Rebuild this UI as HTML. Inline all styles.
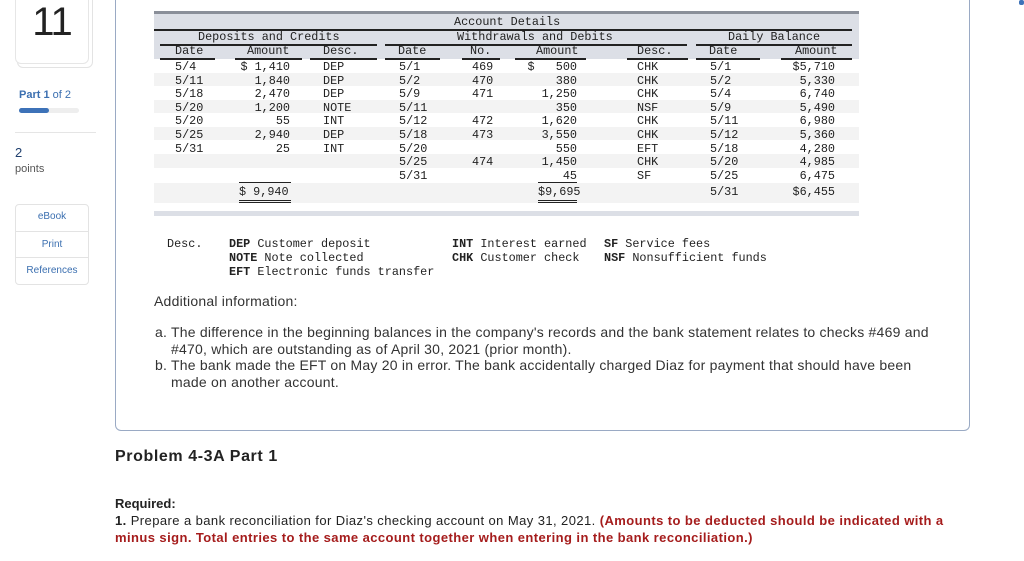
<!DOCTYPE html>
<html><head><meta charset="utf-8"><style>
*{margin:0;padding:0;box-sizing:border-box}
body{width:1024px;height:561px;overflow:hidden;background:#fff;position:relative;font-family:"Liberation Sans",sans-serif;color:#222}
.a{position:absolute;white-space:nowrap}
.m{font-family:"Liberation Mono",monospace;font-size:11.8px;color:#222;line-height:13px}
.r{text-align:right}
.ln{position:absolute;height:1.5px;background:#222}
.s{font-size:14px;line-height:17px;color:#333;letter-spacing:0.22px}
</style></head><body>
<!-- sidebar -->
<div class="a" style="left:17px;top:-10px;width:76px;height:78px;border:1px solid #e3e3e3;border-radius:6px"></div>
<div class="a" style="left:15px;top:-12px;width:74px;height:76px;border:1px solid #e6e6e6;border-radius:6px;background:#fff"></div>
<div class="a" style="left:15px;top:2px;width:74px;text-align:center;font-size:40px;line-height:40px;color:#222;letter-spacing:-1px">11</div>
<div class="a" style="left:19px;top:89px;font-size:11px;color:#3b6fb0"><b>Part 1</b> of 2</div>
<div class="a" style="left:19px;top:108px;width:60px;height:5px;background:#eee;border-radius:3px"></div>
<div class="a" style="left:19px;top:108px;width:30px;height:5px;background:#3d72b8;border-radius:3px"></div>
<div class="a" style="left:15px;top:132px;width:81px;height:1px;background:#e5e5e5"></div>
<div class="a" style="left:15px;top:145px;font-size:13px;color:#1f3f6e">2</div>
<div class="a" style="left:15px;top:163px;font-size:11px;color:#555">points</div>
<div class="a" style="left:15px;top:204px;width:74px;height:81px;border:1px solid #e3e3e3;border-radius:4px"></div>
<div class="a" style="left:15px;top:231px;width:74px;height:1px;background:#e3e3e3"></div>
<div class="a" style="left:15px;top:257px;width:74px;height:1px;background:#e3e3e3"></div>
<div class="a" style="left:15px;top:211px;width:74px;text-align:center;font-size:10px;color:#3b6fb0">eBook</div>
<div class="a" style="left:15px;top:239px;width:74px;text-align:center;font-size:10px;color:#3b6fb0">Print</div>
<div class="a" style="left:15px;top:265px;width:74px;text-align:center;font-size:10px;color:#3b6fb0">References</div>
<div class="a" style="left:1019px;top:0;width:5px;height:5px;background:#3d72b8;border-radius:2px"></div>
<!-- box -->
<div class="a" style="left:115px;top:-20px;width:855px;height:451px;border:1.5px solid #9aaac4;border-top:none;border-radius:0 0 6px 6px"></div>
<!-- table bg -->
<div class="a" style="left:154px;top:11px;width:705px;height:48px;background:#dcdfe6"></div>
<div class="a" style="left:154px;top:11px;width:705px;height:3px;background:#8a8f99"></div>
<div class="a" style="left:154px;top:73px;width:705px;height:13px;background:#f3f3f3"></div>
<div class="a" style="left:154px;top:100px;width:705px;height:13px;background:#f3f3f3"></div>
<div class="a" style="left:154px;top:127px;width:705px;height:13px;background:#f3f3f3"></div>
<div class="a" style="left:154px;top:154px;width:705px;height:14px;background:#f3f3f3"></div>
<div class="a" style="left:154px;top:183px;width:705px;height:20px;background:#f3f3f3"></div>
<div class="a" style="left:154px;top:211px;width:705px;height:5px;background:#dcdfe6"></div>
<!-- header lines -->
<div class="ln" style="left:154px;top:29px;width:698px"></div>
<div class="ln" style="left:160px;top:44px;width:217px"></div>
<div class="ln" style="left:385px;top:44px;width:302px"></div>
<div class="ln" style="left:696px;top:44px;width:156px"></div>
<div class="ln" style="left:160px;top:58px;width:55px"></div>
<div class="ln" style="left:235px;top:58px;width:67px"></div>
<div class="ln" style="left:310px;top:58px;width:67px"></div>
<div class="ln" style="left:385px;top:58px;width:55px"></div>
<div class="ln" style="left:462px;top:58px;width:38px"></div>
<div class="ln" style="left:515px;top:58px;width:71px"></div>
<div class="ln" style="left:627px;top:58px;width:61px"></div>
<div class="ln" style="left:696px;top:58px;width:64px"></div>
<div class="ln" style="left:781px;top:58px;width:71px"></div>
<div class="a m" style="left:454px;top:16px">Account Details</div>
<div class="a m" style="left:198px;top:31px">Deposits and Credits</div>
<div class="a m" style="left:457px;top:31px">Withdrawals and Debits</div>
<div class="a m" style="left:728px;top:31px">Daily Balance</div>
<div class="a m" style="left:175px;top:45px">Date</div>
<div class="a m" style="left:247px;top:45px">Amount</div>
<div class="a m" style="left:323px;top:45px">Desc.</div>
<div class="a m" style="left:398px;top:45px">Date</div>
<div class="a m" style="left:470px;top:45px">No.</div>
<div class="a m" style="left:536px;top:45px">Amount</div>
<div class="a m" style="left:637px;top:45px">Desc.</div>
<div class="a m" style="left:709px;top:45px">Date</div>
<div class="a m" style="left:795px;top:45px">Amount</div>
<!-- body -->
<div class="a m" style="left:175px;top:61px;line-height:13.6px">5/4<br>5/11<br>5/18<br>5/20<br>5/20<br>5/25<br>5/31</div>
<div class="a m r" style="left:220px;width:70px;top:61px;line-height:13.6px">$ 1,410<br>1,840<br>2,470<br>1,200<br>55<br>2,940<br>25</div>
<div class="a m" style="left:323px;top:61px;line-height:13.6px">DEP<br>DEP<br>DEP<br>NOTE<br>INT<br>DEP<br>INT</div>
<div class="a m" style="left:399px;top:61px;line-height:13.6px">5/1<br>5/2<br>5/9<br>5/11<br>5/12<br>5/18<br>5/20<br>5/25<br>5/31</div>
<div class="a m" style="left:472px;top:61px;line-height:13.6px">469<br>470<br>471<br><br>472<br>473<br><br>474</div>
<div class="a m r" style="left:500px;width:77px;top:61px;line-height:13.6px">$&nbsp;&nbsp; 500<br>380<br>1,250<br>350<br>1,620<br>3,550<br>550<br>1,450<br>45</div>
<div class="a m" style="left:637px;top:61px;line-height:13.6px">CHK<br>CHK<br>CHK<br>NSF<br>CHK<br>CHK<br>EFT<br>CHK<br>SF</div>
<div class="a m" style="left:710px;top:61px;line-height:13.6px">5/1<br>5/2<br>5/4<br>5/9<br>5/11<br>5/12<br>5/18<br>5/20<br>5/25</div>
<div class="a m r" style="left:760px;width:75px;top:61px;line-height:13.6px">$5,710<br>5,330<br>6,740<br>5,490<br>6,980<br>5,360<br>4,280<br>4,985<br>6,475</div>
<div class="ln" style="left:239px;top:182px;width:52px;height:1px"></div>
<div class="ln" style="left:538px;top:182px;width:39px;height:1px"></div>
<div class="a m" style="left:239px;top:186px">$ 9,940</div>
<div class="a m" style="left:538px;top:186px">$9,695</div>
<div class="a m" style="left:710px;top:186px">5/31</div>
<div class="a m r" style="left:760px;width:75px;top:186px">$6,455</div>
<div class="ln" style="left:239px;top:200px;width:52px;height:1px"></div>
<div class="ln" style="left:239px;top:202px;width:52px;height:1px"></div>
<div class="ln" style="left:538px;top:200px;width:39px;height:1px"></div>
<div class="ln" style="left:538px;top:202px;width:39px;height:1px"></div>
<!-- legend -->
<div class="a m" style="left:167px;top:238px;font-size:11.8px">Desc.</div>
<div class="a m" style="left:229px;top:238px;font-size:11.8px;line-height:13.8px"><b>DEP</b> Customer deposit<br><b>NOTE</b> Note collected<br><b>EFT</b> Electronic funds transfer</div>
<div class="a m" style="left:452px;top:238px;font-size:11.8px;line-height:13.8px"><b>INT</b> Interest earned<br><b>CHK</b> Customer check</div>
<div class="a m" style="left:604px;top:238px;font-size:11.8px;line-height:13.8px"><b>SF</b> Service fees<br><b>NSF</b> Nonsufficient funds</div>
<!-- text -->
<div class="a s" style="left:154px;top:293px">Additional information:</div>
<div class="a s" style="left:155px;top:324px">a. The difference in the beginning balances in the company's records and the bank statement relates to checks #469 and</div>
<div class="a s" style="left:171px;top:341px">#470, which are outstanding as of April 30, 2021 (prior month).</div>
<div class="a s" style="left:155px;top:357px">b. The bank made the EFT on May 20 in error. The bank accidentally charged Diaz for payment that should have been</div>
<div class="a s" style="left:171px;top:374px">made on another account.</div>
<div class="a" style="left:115px;top:448px;font-size:16px;font-weight:bold;color:#222;letter-spacing:0.6px">Problem 4-3A Part 1</div>
<div class="a" style="left:115px;top:496px;font-size:13px;font-weight:bold;color:#222">Required:</div>
<div class="a" style="left:115px;top:513px;font-size:13px;color:#222;letter-spacing:0.42px"><b>1.</b> Prepare a bank reconciliation for Diaz's checking account on May 31, 2021. <b style="color:#a51c1c">(Amounts to be deducted should be indicated with a</b></div>
<div class="a" style="left:115px;top:530px;font-size:13px;color:#a51c1c;font-weight:bold;letter-spacing:0.42px">minus sign. Total entries to the same account together when entering in the bank reconciliation.)</div>
</body></html>
